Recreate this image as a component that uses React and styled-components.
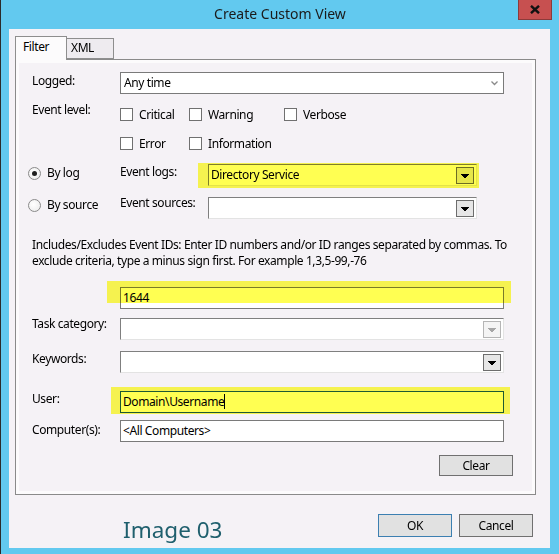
import React from 'react';
import styled, { createGlobalStyle } from 'styled-components';

const GlobalStyle = createGlobalStyle`
  html, body {
    margin: 0;
    padding: 0;
    background: #ffffff;
  }
  body {
    font-family: "Noto Sans", "Segoe UI", sans-serif;
    font-size: 12px;
    letter-spacing: -0.4px;
    color: #000000;
  }
`;

const Window = styled.div`
  width: 559px;
  height: 554px;
  box-sizing: border-box;
  background: #62c9ef;
  border-left: 1px solid #2b2b2b;
  display: flex;
  flex-direction: column;
`;

const TitleBar = styled.div`
  height: 29px;
  flex: none;
  display: grid;
  grid-template-columns: 1fr auto 1fr;
  align-items: start;
`;

const Title = styled.div`
  grid-column: 2;
  padding-top: 4px;
  font-size: 14px;
  line-height: 20px;
  letter-spacing: 0;
  color: #1b1b1b;
`;

const CloseButton = styled.div`
  grid-column: 3;
  justify-self: end;
  margin-right: 7px;
  width: 34px;
  height: 20px;
  box-sizing: border-box;
  background: #c75050;
  border: 1px solid #8c3a3a;
  border-top: none;
  display: flex;
  align-items: center;
  justify-content: center;
`;

const ClientArea = styled.div`
  flex: 1;
  margin: 0 9px 6px 8px;
  background: #f5f2f6;
  padding: 7px 15px 0 6px;
  display: flex;
  flex-direction: column;
`;

const Tabs = styled.div`
  display: flex;
  align-items: flex-end;
  height: 24px;
  margin-bottom: -1px;
`;

const Tab = styled.div`
  position: relative;
  box-sizing: border-box;
  border: 1px solid #8e8e8e;
  line-height: 16px;
  ${(p) =>
    p.$active
      ? `
    z-index: 1;
    width: 52px;
    height: 24px;
    padding: 2px 0 0 7px;
    background: #fcfbfc;
    border-bottom: none;
  `
      : `
    width: 48px;
    height: 21px;
    margin-left: -1px;
    margin-bottom: 1px;
    padding: 1px 0 0 4px;
    background: #eeebef;
  `}
`;

const Panel = styled.div`
  width: 521px;
  height: 436px;
  box-sizing: border-box;
  border: 1px solid #8a8a8a;
  box-shadow: inset 0 0 0 3px #fcfbfc;
  padding: 0 0 0 12px;
  display: flex;
  flex-direction: column;
`;

const Row = styled.div`
  display: flex;
  align-items: flex-start;
  margin-top: ${(p) => p.$gap || 0}px;
`;

const FieldLabel = styled.div`
  width: 92px;
  flex: none;
  box-sizing: border-box;
  padding-left: 4px;
  line-height: 16px;
  margin-top: ${(p) => p.$offset || 0}px;
  white-space: nowrap;
`;

const SubLabel = styled.div`
  width: 88px;
  flex: none;
  line-height: 16px;
  margin-top: ${(p) => p.$offset || 0}px;
  white-space: nowrap;
`;

const RadioOption = styled.label`
  width: 92px;
  flex: none;
  display: flex;
  align-items: center;
  gap: 6px;
  line-height: 16px;
  margin-top: ${(p) => p.$offset || 0}px;
  white-space: nowrap;
`;

const Radio = styled.span`
  width: 13px;
  height: 13px;
  box-sizing: border-box;
  border-radius: 50%;
  border: 1px solid #8a8a8a;
  background: radial-gradient(circle at 40% 40%, #ffffff 0%, #f0f0f0 70%, #e2e2e2 100%);
  display: flex;
  align-items: center;
  justify-content: center;
  &::after {
    content: '';
    width: 5px;
    height: 5px;
    border-radius: 50%;
    background: ${(p) => (p.$checked ? '#1f1f1f' : 'transparent')};
  }
`;

const CheckGrid = styled.div`
  display: grid;
  grid-template-columns: 69px 95px auto;
  row-gap: 16px;
  margin-top: 6px;
`;

const CheckItem = styled.label`
  display: flex;
  align-items: center;
  gap: 6px;
  height: 13px;
  line-height: 16px;
  white-space: nowrap;
`;

const CheckBox = styled.span`
  width: 13px;
  height: 13px;
  flex: none;
  box-sizing: border-box;
  border: 1px solid #707070;
  background: #ffffff;
`;

const Field = styled.div`
  position: relative;
  width: ${(p) => p.$width}px;
  height: 22px;
  flex: none;
  box-sizing: border-box;
  background: #ffffff;
  display: flex;
  align-items: center;
  border: 1px solid;
  border-color: ${(p) =>
    p.$sunken ? '#7f7f7f #e3e3e3 #e3e3e3 #7f7f7f' : p.$focus ? '#1e5a9c' : '#7a7a7a'};
  padding-left: ${(p) => p.$indent ?? 2}px;
  white-space: nowrap;
`;

const FieldText = styled.span`
  flex: 1;
  line-height: 16px;
`;

const Caret = styled.span`
  display: inline-block;
  width: 1px;
  height: 15px;
  background: #000000;
  vertical-align: -3px;
`;

const DropButton = styled.span`
  width: 18px;
  height: 17px;
  flex: none;
  margin-right: 2px;
  box-sizing: border-box;
  border: 1px solid ${(p) => (p.$disabled ? '#b5b5b5' : '#6d6d6d')};
  background: ${(p) => (p.$disabled ? '#f4f4f4' : '#e6e6e6')};
  display: flex;
  align-items: center;
  justify-content: center;
  padding-top: 2px;
`;

const Chevron = styled.svg`
  flex: none;
  margin-right: 5px;
`;

const Highlight = styled.span`
  position: absolute;
  left: ${(p) => p.$l}px;
  right: ${(p) => p.$r}px;
  top: ${(p) => p.$t}px;
  bottom: ${(p) => p.$b}px;
  background: #ffff52;
  mix-blend-mode: multiply;
  pointer-events: none;
`;

const Description = styled.div`
  margin-top: ${(p) => p.$gap}px;
  padding-left: 4px;
  line-height: 16px;
  white-space: nowrap;
`;

const InputRow = styled(Row)`
  padding-left: 92px;
`;

const PushButton = styled.button`
  width: 74px;
  height: ${(p) => p.$height || 23}px;
  box-sizing: border-box;
  border: 1px solid ${(p) => (p.$primary ? '#3c7fb1' : '#707070')};
  background: #e1e1e1;
  font-family: inherit;
  font-size: 12px;
  letter-spacing: inherit;
  color: #000000;
  padding: 0;
  line-height: 16px;
`;

const ClearRow = styled(Row)`
  justify-content: flex-end;
  margin-right: 22px;
`;

const Footer = styled.div`
  display: flex;
  align-items: flex-start;
  padding-top: 19px;
`;

const Caption = styled.div`
  margin: 1px 0 0 108px;
  font-size: 22.5px;
  line-height: 30px;
  letter-spacing: 0;
  color: #1f5f6d;
`;

const ButtonBar = styled.div`
  margin-left: auto;
  margin-right: 2px;
  display: flex;
  gap: 7px;
`;

function Arrow({ disabled }) {
  return (
    <svg width="8" height="5" viewBox="0 0 8 5" shapeRendering="crispEdges">
      <polygon points="0,0 8,0 4,4.5" fill={disabled ? '#a6a6a6' : '#000000'} />
    </svg>
  );
}

function Combo({ width, text, disabled, children }) {
  return (
    <Field $width={width} $sunken>
      {children}
      <FieldText>{text}</FieldText>
      <DropButton $disabled={disabled}>
        <Arrow disabled={disabled} />
      </DropButton>
    </Field>
  );
}

function Check({ label }) {
  return (
    <CheckItem>
      <CheckBox />
      {label}
    </CheckItem>
  );
}

export default function App() {
  return (
    <>
      <GlobalStyle />
      <Window>
        <TitleBar>
          <Title>Create Custom View</Title>
          <CloseButton>
            <svg width="10" height="9" viewBox="0 0 10 9">
              <path d="M1 0.8 L9 8.2 M9 0.8 L1 8.2" stroke="#111" strokeWidth="2.4" />
            </svg>
          </CloseButton>
        </TitleBar>
        <ClientArea>
          <Tabs>
            <Tab $active>Filter</Tab>
            <Tab>XML</Tab>
          </Tabs>
          <Panel>
            <Row $gap={12}>
              <FieldLabel $offset={1}>Logged:</FieldLabel>
              <Field $width={384} $indent={3}>
                <FieldText>Any time</FieldText>
                <Chevron width="7" height="5" viewBox="0 0 7 5">
                  <path d="M0.5 0.5 L3.5 3.5 L6.5 0.5" stroke="#8a8a8a" strokeWidth="1.3" fill="none" />
                </Chevron>
              </Field>
            </Row>
            <Row $gap={8}>
              <FieldLabel>Event level:</FieldLabel>
              <CheckGrid>
                <Check label="Critical" />
                <Check label="Warning" />
                <Check label="Verbose" />
                <Check label="Error" />
                <Check label="Information" />
              </CheckGrid>
            </Row>
            <Row $gap={14}>
              <RadioOption $offset={1}>
                <Radio $checked />
                By log
              </RadioOption>
              <SubLabel>Event logs:</SubLabel>
              <Combo width={269} text="Directory Service">
                <Highlight $l={-11} $r={-3} $t={-2} $b={-3} />
              </Combo>
            </Row>
            <Row $gap={11}>
              <RadioOption>
                <Radio />
                By source
              </RadioOption>
              <SubLabel $offset={-2}>Event sources:</SubLabel>
              <Combo width={269} text="" />
            </Row>
            <Description $gap={18}>
              Includes/Excludes Event IDs: Enter ID numbers and/or ID ranges separated by commas. To
              <br />
              exclude criteria, type a minus sign first. For example 1,3,5-99,-76
            </Description>
            <InputRow $gap={18}>
              <Field $width={384}>
                <FieldText>1644</FieldText>
                <Highlight $l={-14} $r={-8} $t={-7} $b={5} />
              </Field>
            </InputRow>
            <Row $gap={9}>
              <FieldLabel $offset={-2}>Task category:</FieldLabel>
              <Combo width={384} text="" disabled />
            </Row>
            <Row $gap={11}>
              <FieldLabel>Keywords:</FieldLabel>
              <Combo width={384} text="" />
            </Row>
            <Row $gap={18}>
              <FieldLabel>User:</FieldLabel>
              <Field $width={384} $focus>
                <FieldText>
                  Domain\Username
                  <Caret />
                </FieldText>
                <Highlight $l={-10} $r={-7} $t={-5} $b={-2} />
              </Field>
            </Row>
            <Row $gap={7}>
              <FieldLabel $offset={2}>Computer(s):</FieldLabel>
              <Field $width={384}>
                <FieldText>&lt;All Computers&gt;</FieldText>
              </Field>
            </Row>
            <ClearRow $gap={13}>
              <PushButton $height={21}>Clear</PushButton>
            </ClearRow>
          </Panel>
          <Footer>
            <Caption>Image 03</Caption>
            <ButtonBar>
              <PushButton $primary>OK</PushButton>
              <PushButton>Cancel</PushButton>
            </ButtonBar>
          </Footer>
        </ClientArea>
      </Window>
    </>
  );
}
